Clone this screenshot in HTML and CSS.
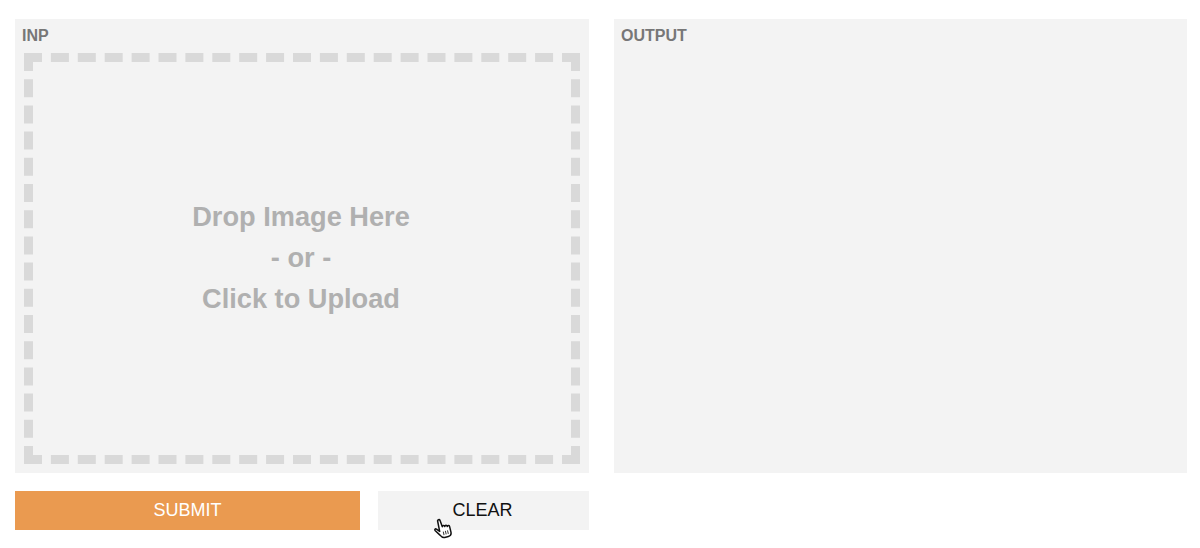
FILE: index.html
```html
<!DOCTYPE html>
<html lang="en">
<head>
<meta charset="utf-8">
<title>Interface</title>
<link rel="stylesheet" href="styles.css">
</head>
<body>
<main class="app">
  <div class="column column-left">
    <section class="panel">
      <div class="label">INP</div>
      <div class="drop">
        <div class="drop-text">Drop Image Here<br>- or -<br>Click to Upload</div>
      </div>
    </section>
    <div class="actions">
      <button class="btn btn-submit">SUBMIT</button>
      <button class="btn btn-clear">CLEAR</button>
    </div>
    <svg class="cursor" viewBox="0 0 18 22" width="18" height="22" aria-hidden="true">
      <g transform="rotate(-14 9 12)">
        <path d="M5.2 13.5 L2.6 10.6 C1.6 9.5 0.4 10.6 1.1 11.8 L4.6 17.2 C5.4 19 6.6 20.6 8.6 20.6 L12.4 20.6 C14.6 20.6 16 18.8 16 16.4 L16 11 C16 9.6 14.2 9.4 13.8 10.6 C13.8 9 11.8 8.6 11.4 10 C11.4 8.4 9.2 8 8.9 9.6 L8.2 3 C8 1.4 5.6 1.6 5.7 3.2 Z" fill="#fff" stroke="#111" stroke-width="1.5" stroke-linejoin="round"/>
        <path d="M8.6 14.5v3.6M10.8 14.5v3.6M13 14.5v3.6" stroke="#333" stroke-width="1" fill="none"/>
      </g>
    </svg>
  </div>
  <div class="column">
    <section class="panel">
      <div class="label">OUTPUT</div>
    </section>
  </div>
</main>
</body>
</html>
```
FILE: styles.css
```css
* { box-sizing: border-box; }
html, body { margin: 0; height: 100%; background: #fff; }
body { font-family: "Liberation Sans", Arial, sans-serif; }
.app {
  display: grid;
  grid-template-columns: 574px 573px;
  column-gap: 25px;
  padding: 19px 0 0 15px;
}
.column { display: flex; flex-direction: column; gap: 18px; }
.column-left { position: relative; }
.panel {
  height: 454px;
  background: #f3f3f3;
  padding: 9px 9px 9px;
  display: flex;
  flex-direction: column;
}
.label {
  height: 25px;
  margin-left: -2px;
  font-size: 16px;
  line-height: 16px;
  font-weight: 700;
  color: #777;
}
.drop {
  flex: 1;
  border: 9px dashed #d9d9d9;
  display: flex;
  align-items: center;
  justify-content: center;
  padding: 0 2px 2px 0;
}
.drop-text {
  font-size: 27.2px;
  line-height: 41px;
  font-weight: 700;
  color: #b0b0b0;
  text-align: center;
}
.actions { display: flex; gap: 18px; }
.btn {
  height: 39px;
  border: 0;
  padding: 0;
  font-family: inherit;
  font-size: 18px;
}
.btn-submit { width: 345px; background: #ea9a50; color: #fff; }
.btn-clear { width: 211px; padding-right: 2px; background: #f3f3f3; color: #111; }
.cursor { position: absolute; left: 419px; top: 498px; }
```
